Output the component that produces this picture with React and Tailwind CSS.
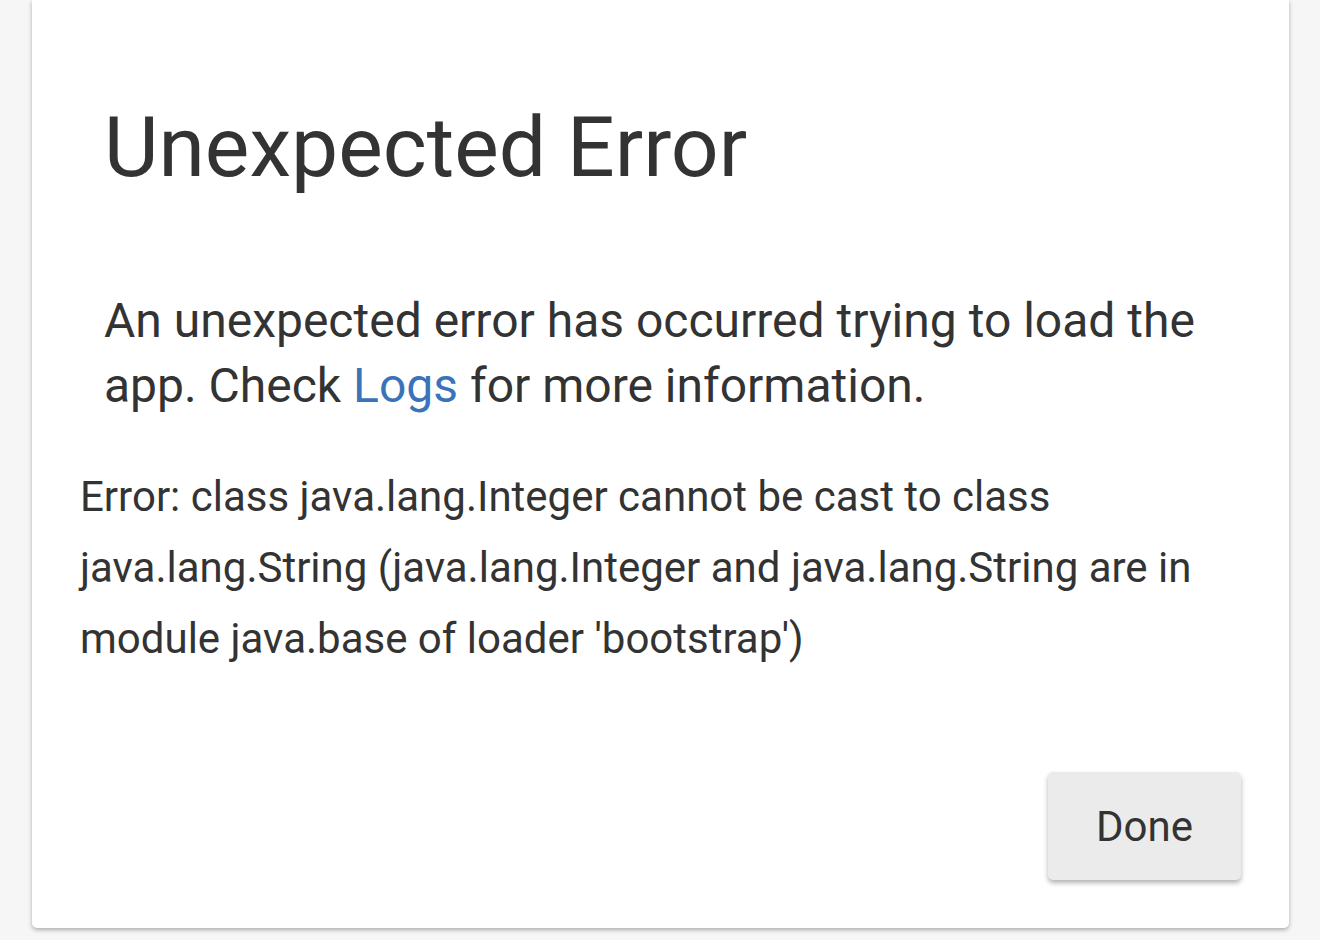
export default function App() {
  return (
    <div className="w-[1320px] h-[940px] overflow-hidden bg-[#f6f6f6] font-['Roboto',sans-serif] text-[#333333]">
      <div className="ml-[32px] w-[1257px] h-[928px] bg-white rounded-b-[5px] shadow-[0_2px_4px_rgba(0,0,0,0.3)] flex flex-col">
        <h1 className="pt-[106px] pl-[72px] text-[84px] leading-none font-normal">
          Unexpected Error
        </h1>

        <p className="mt-[98px] pl-[72px] pr-[40px] text-[48px] leading-[65px]">
          An unexpected error has occurred trying to load the app. Check{" "}
          <a className="text-[#3a73b9]">Logs</a> for more information.
        </p>

        <p className="mt-[43px] pl-[48px] pr-[48px] text-[42px] leading-[71px]">
          Error: class java.lang.Integer cannot be cast to class java.lang.String
          (java.lang.Integer and java.lang.String are in module java.base of
          loader 'bootstrap')
        </p>

        <div className="mt-[98px] pr-[48px] flex justify-end">
          <button className="w-[193px] h-[108px] rounded-[5px] bg-[#ebebeb] text-[42px] text-[#333333] shadow-[0_3px_5px_rgba(0,0,0,0.3)]">
            Done
          </button>
        </div>
      </div>
    </div>
  );
}
